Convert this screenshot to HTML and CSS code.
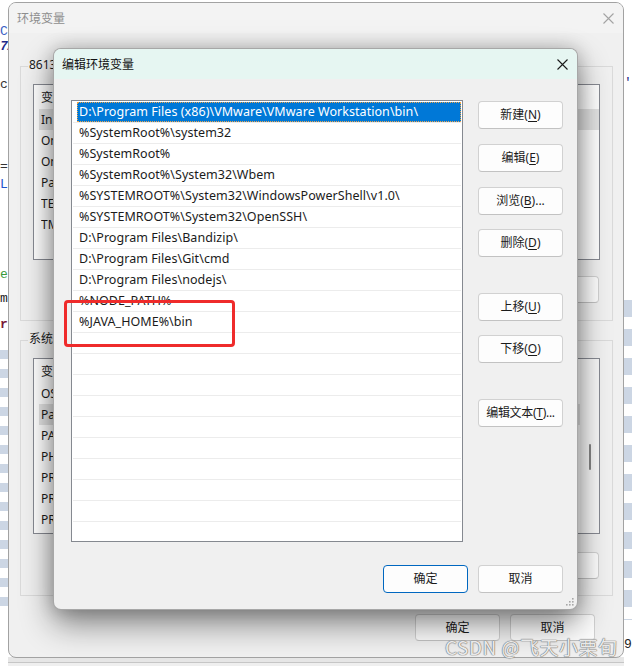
FILE: index.html
```html
<!DOCTYPE html>
<html lang="zh-CN">
<head>
<meta charset="utf-8">
<title>编辑环境变量</title>
<link rel="stylesheet" href="styles.css">
</head>
<body>
<div class="desktop">
  <div class="strip strip-left">
    <div class="frag f1">C</div>
    <div class="frag f2">7A</div>
    <div class="frag f3">c</div>
    <div class="frag f4">=</div>
    <div class="frag f5">Lc</div>
    <div class="frag f6">e(</div>
    <div class="frag f7">m</div>
    <div class="frag f8">r</div>
    <div class="bands bands-left"></div>
  </div>
  <div class="middle"></div>
  <div class="strip strip-right">
    <div class="frag r1">'a</div>
    <div class="bands bands-right"></div>
    <div class="frag r2">9.</div>
  </div>

  <!-- background window: 环境变量 -->
  <div class="win back">
    <div class="back-title">
      <span class="back-title-text">环境变量</span>
      <svg class="x-icon" width="11" height="11" viewBox="0 0 11 11"><path d="M0.5 0.5L10.5 10.5M10.5 0.5L0.5 10.5" stroke="#a3a3a3" stroke-width="1.1"/></svg>
    </div>
    <div class="back-body">
      <div class="group g1">
        <span class="group-label">8613</span>
        <div class="vlist">
          <div class="vhead"><span class="c1">变量</span></div>
          <div class="vrow hl"><span class="c1">In</span></div>
          <div class="vrow"><span class="c1">On</span></div>
          <div class="vrow"><span class="c1">On</span></div>
          <div class="vrow"><span class="c1">Pa</span></div>
          <div class="vrow"><span class="c1">TE</span></div>
          <div class="vrow"><span class="c1">TM</span></div>
        </div>
        <div class="btnrow br1">
          <button class="btn bb"></button>
          <button class="btn bb"></button>
          <button class="btn bb"></button>
        </div>
      </div>
      <div class="group g2">
        <span class="group-label">系统</span>
        <div class="vlist scroll">
          <div class="vrows">
            <div class="vhead"><span class="c1">变量</span></div>
            <div class="vrow"><span class="c1">OS</span></div>
            <div class="vrow hl"><span class="c1">Pa</span></div>
            <div class="vrow"><span class="c1">PA</span></div>
            <div class="vrow"><span class="c1">PH</span></div>
            <div class="vrow"><span class="c1">PR</span></div>
            <div class="vrow"><span class="c1">PR</span></div>
            <div class="vrow"><span class="c1">PR</span></div>
          </div>
          <div class="vscroll"><div class="thumb"></div></div>
        </div>
        <div class="btnrow br2">
          <button class="btn bb"></button>
          <button class="btn bb"></button>
          <button class="btn bb"></button>
        </div>
      </div>
      <div class="back-footer">
        <button class="btn bb">确定</button>
        <button class="btn bb">取消</button>
      </div>
    </div>
  </div>

  <!-- foreground window: 编辑环境变量 -->
  <div class="win front">
    <div class="front-title">
      <span class="front-title-text">编辑环境变量</span>
      <svg class="x-icon fx" width="11" height="11" viewBox="0 0 11 11"><path d="M0.5 0.5L10.5 10.5M10.5 0.5L0.5 10.5" stroke="#1a1a1a" stroke-width="1.1"/></svg>
    </div>
    <div class="front-main">
      <div class="plist">
        <div class="prow sel"><span class="ptext">D:\Program Files (x86)\VMware\VMware Workstation\bin\</span></div>
        <div class="prow"><span class="ptext">%SystemRoot%\system32</span></div>
        <div class="prow"><span class="ptext">%SystemRoot%</span></div>
        <div class="prow"><span class="ptext">%SystemRoot%\System32\Wbem</span></div>
        <div class="prow"><span class="ptext">%SYSTEMROOT%\System32\WindowsPowerShell\v1.0\</span></div>
        <div class="prow"><span class="ptext">%SYSTEMROOT%\System32\OpenSSH\</span></div>
        <div class="prow"><span class="ptext">D:\Program Files\Bandizip\</span></div>
        <div class="prow"><span class="ptext">D:\Program Files\Git\cmd</span></div>
        <div class="prow"><span class="ptext">D:\Program Files\nodejs\</span></div>
        <div class="prow"><span class="ptext">%NODE_PATH%</span></div>
        <div class="prow"><span class="ptext">%JAVA_HOME%\bin</span></div>
        <div class="prow"></div>
        <div class="prow"></div>
        <div class="prow"></div>
        <div class="prow"></div>
        <div class="prow"></div>
        <div class="prow"></div>
        <div class="prow"></div>
        <div class="prow"></div>
        <div class="prow"></div>
        <div class="prow"></div>
        <div class="prow"></div>
      </div>
      <div class="side">
        <button class="btn fb s1">新建(<u>N</u>)</button>
        <button class="btn fb s2">编辑(<u>E</u>)</button>
        <button class="btn fb s3">浏览(<u>B</u>)...</button>
        <button class="btn fb s4">删除(<u>D</u>)</button>
        <button class="btn fb s5">上移(<u>U</u>)</button>
        <button class="btn fb s6">下移(<u>O</u>)</button>
        <button class="btn fb s7">编辑文本(<u>T</u>)...</button>
      </div>
    </div>
    <div class="front-footer">
      <button class="btn fb default">确定</button>
      <button class="btn fb">取消</button>
    </div>
    <div class="redbox"></div>
    <svg class="grip" width="8" height="8" viewBox="0 0 8 8">
      <rect x="6" y="0" width="1.6" height="1.6" fill="#a8a8a8"/>
      <rect x="3" y="3" width="1.6" height="1.6" fill="#a8a8a8"/>
      <rect x="6" y="3" width="1.6" height="1.6" fill="#a8a8a8"/>
      <rect x="0" y="6" width="1.6" height="1.6" fill="#a8a8a8"/>
      <rect x="3" y="6" width="1.6" height="1.6" fill="#a8a8a8"/>
      <rect x="6" y="6" width="1.6" height="1.6" fill="#a8a8a8"/>
    </svg>
  </div>

  <div class="watermark">CSDN @飞天小栗旬</div>
</div>
</body>
</html>
```

FILE: styles.css
```css
* { box-sizing: border-box; }
html, body { margin: 0; padding: 0; }
body {
  font-family: "Noto Sans", "Noto Sans CJK SC", sans-serif;
  font-size: 12px;
  color: #1b1b1b;
  background: #ffffff;
}
u { text-decoration: underline; text-underline-offset: 2px; }

.desktop {
  position: relative;
  width: 632px;
  height: 666px;
  overflow: hidden;
  display: flex;
  background: #ffffff;
}

/* desktop strips visible behind the windows */
.strip {
  width: 8px;
  height: 666px;
  overflow: hidden;
  font-family: "Liberation Mono", monospace;
  font-size: 13px;
  line-height: 14px;
  display: flex;
  flex-direction: column;
}
.strip-left { background: #ffffff; }
.middle {
  flex: 1;
  background: linear-gradient(#ffffff 0, #ffffff 657px, #e6e6e6 657px, #e6e6e6 662px, #c6c6c6 662px, #c6c6c6 663px, #efefef 663px);
}
.strip-right { background: #ffffff; }
.frag { height: 14px; flex: none; white-space: nowrap; }
.f1 { margin-top: 25px; color: #3b62c4; }
.f2 { margin-top: 1px; color: #1e2a8a; font-style: italic; font-weight: bold; }
.f3 { margin-top: 24px; color: #333; }
.f4 { margin-top: 68px; color: #333; }
.f5 { margin-top: 4px; color: #2255cc; }
.f6 { margin-top: 76px; color: #3a9a3a; }
.f7 { margin-top: 10px; color: #222; }
.f8 { margin-top: 12px; color: #7a1a3a; font-weight: bold; }
.bands {
  flex: none;
  background: repeating-linear-gradient(#ffffff 0, #ffffff 10px, #ccd6e4 10px, #ccd6e4 19px);
}
.bands-left { margin-top: 8px; height: 270px; }
.r1 { margin-top: 76px; color: #1e2a8a; }
.bands-right {
  margin-top: 210px;
  height: 320px;
  background: repeating-linear-gradient(#ccd6e4 0, #ccd6e4 17px, #ffffff 17px, #ffffff 29px);
}
.r2 { margin-top: 18px; color: #222; }

/* windows */
.win {
  position: absolute;
  border-radius: 8px;
  background: #f0f0f0;
}
.back {
  left: 8px;
  top: 2px;
  width: 616px;
  height: 656px;
  border: 1px solid #a2a2a2;
  display: flex;
  flex-direction: column;
}
.back-title {
  height: 30px;
  flex: none;
  display: flex;
  align-items: center;
  padding-left: 8px;
  padding-right: 9px;
  background: #f3f3f3;
  border-radius: 7px 7px 0 0;
}
.back-title-text { color: #8e8e8e; }
.x-icon { margin-left: auto; display: block; }

.back-body {
  padding: 33px 10px 0 11px;
  display: flex;
  flex-direction: column;
}
.group {
  position: relative;
  border: 1px solid #dadada;
  padding: 17px 12px 0 12px;
}
.g1 { padding-bottom: 17px; }
.g2 { margin-top: 19px; padding-bottom: 16px; }
.group-label {
  position: absolute;
  left: 7px;
  top: -10px;
  padding: 0 1px;
  background: #f0f0f0;
  line-height: 16px;
  white-space: nowrap;
}
.vlist {
  height: 176px;
  background: #ffffff;
  border: 1px solid #878a92;
  overflow: hidden;
}
.vlist.scroll { display: flex; }
.vrows { flex: 1; }
.vscroll {
  width: 19px;
  display: flex;
  justify-content: center;
  padding-top: 85px;
  background: #f7f7f7;
}
.thumb { width: 2px; height: 26px; background: #858585; border-radius: 1px; }
.vhead {
  height: 24px;
  display: flex;
  align-items: center;
  padding-left: 7px;
  white-space: nowrap;
}
.vrow {
  height: 21px;
  margin-left: 5px;
  padding-left: 2px;
  display: flex;
  align-items: center;
  white-space: nowrap;
}
.vrow.hl { background: #e3e3e3; }
.c1 { width: 200px; flex: none; overflow: hidden; }

.btnrow {
  display: flex;
  justify-content: flex-end;
  gap: 10px;
  padding-right: 1px;
}
.br1 { margin-top: 16px; }
.br2 { margin-top: 18px; }
.back-footer {
  display: flex;
  justify-content: flex-end;
  gap: 10px;
  margin-top: 18px;
  padding-right: 18px;
}

.btn {
  font-family: inherit;
  font-size: 12px;
  color: #1b1b1b;
  width: 85px;
  background: #fdfdfd;
  border: 1px solid #d1d1d1;
  border-bottom-color: #c2c2c2;
  border-radius: 4px;
  padding: 0;
  display: block;
  text-align: center;
  white-space: nowrap;
  overflow: hidden;
}
.bb { height: 27px; line-height: 25px; }
.fb { height: 28px; line-height: 26px; }
.s7 { letter-spacing: -0.3px; }

/* front dialog */
.front {
  left: 53px;
  top: 48px;
  width: 525px;
  height: 562px;
  border: 1px solid rgba(0, 0, 0, 0.3);
  display: flex;
  flex-direction: column;
  box-shadow: 0 14px 32px rgba(0, 0, 0, 0.46), 0 0 18px rgba(0, 0, 0, 0.2);
}
.front-title {
  height: 30px;
  flex: none;
  display: flex;
  align-items: center;
  padding-left: 8px;
  padding-right: 9px;
  background: #e6f6f2;
  border-radius: 7px 7px 0 0;
}
.front-title-text { color: #111; }
.front-main {
  display: flex;
  padding: 21px 14px 0 17px;
}
.plist {
  width: 392px;
  height: 442px;
  background: #ffffff;
  border: 1px solid #858990;
  padding-top: 1px;
  overflow: hidden;
}
.prow {
  height: 21px;
  margin: 0 1px;
  border-bottom: 1px solid #ececec;
  display: flex;
}
.ptext {
  flex: 1;
  margin-left: 4px;
  padding-left: 2px;
  font-size: 12.5px;
  letter-spacing: 0.05px;
  line-height: 20px;
  white-space: nowrap;
  color: #1b1b1b;
}
.prow.sel .ptext {
  background: #0078d7;
  color: #ffffff;
  outline: 1px dotted #f0a54a;
  outline-offset: -1px;
}
.side {
  width: 85px;
  margin-left: 15px;
  display: flex;
  flex-direction: column;
  padding-top: 1px;
}
.s2, .s3 { margin-top: 15px; }
.s4, .s6 { margin-top: 14px; }
.s5, .s7 { margin-top: 36px; }
.front-footer {
  display: flex;
  justify-content: flex-end;
  gap: 10px;
  padding: 23px 14px 0 0;
}
.btn.default { border: 1px solid #0067c0; }

.redbox {
  position: absolute;
  left: 10px;
  top: 251px;
  width: 171px;
  height: 47px;
  border: 3px solid #ef2b2b;
  border-radius: 4px;
}
.grip {
  position: absolute;
  right: 3px;
  bottom: 3px;
}

.watermark {
  position: absolute;
  left: 445px;
  top: 634px;
  font-family: "Noto Sans CJK SC", sans-serif;
  font-size: 19px;
  line-height: 26px;
  letter-spacing: 0.5px;
  color: rgba(255, 255, 255, 0.85);
  text-shadow: 0 0 1px #777, 0 0 1px #777, 0 0 1px #777;
  white-space: nowrap;
}
```
